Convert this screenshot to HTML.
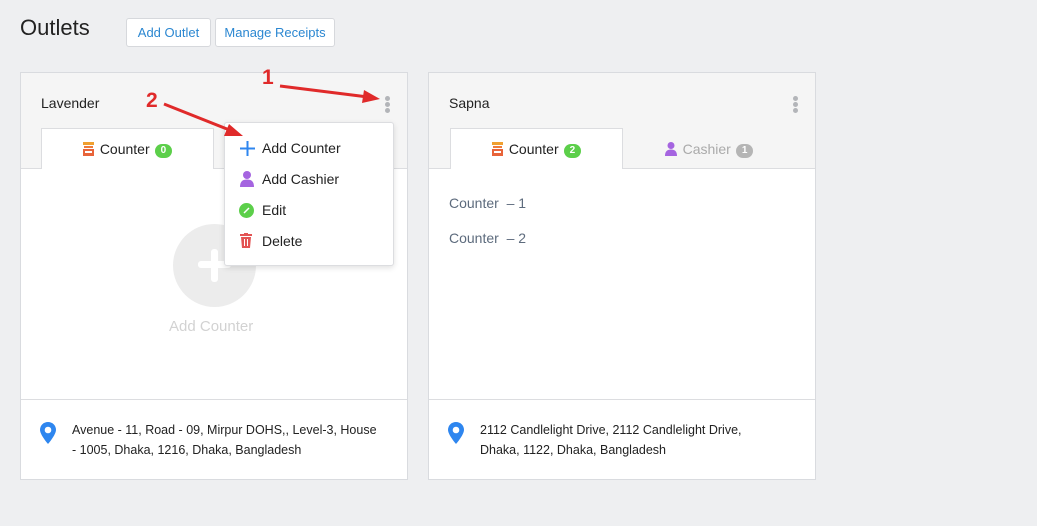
<!DOCTYPE html>
<html><head><meta charset="utf-8"><style>
*{box-sizing:border-box;margin:0;padding:0}
body{width:1037px;height:526px;background:#eeeff1;font-family:"Liberation Sans",sans-serif;position:relative;overflow:hidden;color:#222}
.a{position:absolute}
.btn{position:absolute;top:18px;height:29px;background:#fff;border:1px solid #d6d8dc;border-radius:3px;color:#2b87d1;font-size:13px;line-height:27px;text-align:center}
.card{position:absolute;top:72px;width:388px;height:408px;background:#fff;border:1px solid #d9dbdf}
.head{position:absolute;left:0;top:0;width:386px;height:96px;background:#f5f5f5;border-bottom:1px solid #dcdde0}
.tab{position:absolute;top:55px;height:41px;background:#fff;border:1px solid #dcdde0;border-bottom:none;font-size:14px;line-height:40px;text-align:center}
.badge{display:inline-block;height:14px;padding:0 6px;border-radius:7px;font-size:10px;line-height:14px;color:#fff;vertical-align:1px;margin-left:5px;font-weight:bold}
.dots{position:absolute;right:17px;top:23px;width:5px}
.dots i{display:block;width:5px;height:5px;border-radius:50%;background:#b3b5b9;margin-bottom:1px}
.foot{position:absolute;left:0;top:326px;width:386px;border-top:1px solid #dcdde0;height:80px}
.addr{position:absolute;left:51px;top:20px;font-size:12.5px;line-height:20px;color:#222}
.item{position:absolute;left:37px;font-size:14px;color:#222}
.ic{display:inline-block;vertical-align:-2px;margin-right:6px}
</style></head><body>
<div class="a" style="left:20px;top:15px;font-size:22px;color:#222">Outlets</div>
<div class="btn" style="left:126px;width:85px">Add Outlet</div>
<div class="btn" style="left:215px;width:120px">Manage Receipts</div>

<div class="card" style="left:20px">
 <div class="head">
  <div class="a" style="left:20px;top:22px;font-size:14px">Lavender</div>
  <div class="dots"><i></i><i></i><i></i></div>
  <div class="tab" style="left:20px;width:173px"><svg class="ic" width="11" height="14"><rect x="0" y="0" width="11" height="3" fill="#f0a030"/><rect x="1" y="4" width="9" height="2" fill="#ee7a3a"/><rect x="0" y="7" width="11" height="7" fill="#e8643a"/><rect x="2" y="9" width="7" height="2" fill="#fff"/></svg>Counter<span class="badge" style="background:#5ccf4a">0</span></div>
 </div>
 <div class="a" style="left:152px;top:151px;width:83px;height:83px;border-radius:50%;background:#ececec"></div>
 <div class="a" style="left:177px;top:188px;width:33px;height:7px;background:#fff;border-radius:3px"></div>
 <div class="a" style="left:190px;top:176px;width:7px;height:33px;background:#fff;border-radius:3px"></div>
 <div class="a" style="left:148px;top:245px;font-size:15px;color:#d2d2d2">Add Counter</div>
 <div class="foot">
  <svg class="a" style="left:19px;top:22px" width="16" height="22" viewBox="0 0 16 22"><path d="M8 0C3.6 0 0 3.4 0 7.8 0 13 8 22 8 22s8-9 8-14.2C16 3.4 12.4 0 8 0z" fill="#2e86ef"/><circle cx="8" cy="8" r="3.3" fill="#fff"/></svg>
  <div class="addr">Avenue - 11, Road - 09, Mirpur DOHS,, Level-3, House<br>- 1005, Dhaka, 1216, Dhaka, Bangladesh</div>
 </div>
</div>

<div class="card" style="left:428px">
 <div class="head">
  <div class="a" style="left:20px;top:22px;font-size:14px">Sapna</div>
  <div class="dots"><i></i><i></i><i></i></div>
  <div class="tab" style="left:21px;width:173px"><svg class="ic" width="11" height="14"><rect x="0" y="0" width="11" height="3" fill="#f0a030"/><rect x="1" y="4" width="9" height="2" fill="#ee7a3a"/><rect x="0" y="7" width="11" height="7" fill="#e8643a"/><rect x="2" y="9" width="7" height="2" fill="#fff"/></svg>Counter<span class="badge" style="background:#5ccf4a">2</span></div>
  <div class="a" style="left:194px;top:56px;width:172px;height:41px;font-size:14px;line-height:40px;text-align:center;color:#aaa"><svg class="ic" width="12" height="14"><circle cx="6" cy="3.5" r="3.5" fill="#a564e0"/><path d="M0 14c0-5 2.5-6.5 6-6.5s6 1.5 6 6.5z" fill="#a564e0"/></svg>Cashier<span class="badge" style="background:#b5b5b5">1</span></div>
 </div>
 <div class="a" style="left:20px;top:122px;font-size:14px;color:#5d6b7d">Counter &nbsp;– 1</div>
 <div class="a" style="left:20px;top:157px;font-size:14px;color:#5d6b7d">Counter &nbsp;– 2</div>
 <div class="foot">
  <svg class="a" style="left:19px;top:22px" width="16" height="22" viewBox="0 0 16 22"><path d="M8 0C3.6 0 0 3.4 0 7.8 0 13 8 22 8 22s8-9 8-14.2C16 3.4 12.4 0 8 0z" fill="#2e86ef"/><circle cx="8" cy="8" r="3.3" fill="#fff"/></svg>
  <div class="addr">2112 Candlelight Drive, 2112 Candlelight Drive,<br>Dhaka, 1122, Dhaka, Bangladesh</div>
 </div>
</div>

<div class="a" style="left:224px;top:122px;width:170px;height:144px;background:#fff;border:1px solid #dcdde0;border-radius:3px;box-shadow:0 2px 6px rgba(0,0,0,.12)">
 <svg class="a" style="left:15px;top:18px" width="15" height="15"><path d="M7.5 0v15M0 7.5h15" stroke="#2e86ef" stroke-width="2"/></svg>
 <div class="item" style="top:17px">Add Counter</div>
 <svg class="a" style="left:15px;top:48px" width="14" height="16"><circle cx="7" cy="4" r="4" fill="#a564e0"/><path d="M0 16c0-6 3-7.5 7-7.5s7 1.5 7 7.5z" fill="#a564e0"/></svg>
 <div class="item" style="top:48px">Add Cashier</div>
 <svg class="a" style="left:14px;top:80px" width="15" height="15"><circle cx="7.5" cy="7.5" r="7.5" fill="#5ccf4a"/><path d="M5 10l5-5" stroke="#fff" stroke-width="1.5"/></svg>
 <div class="item" style="top:79px">Edit</div>
 <svg class="a" style="left:15px;top:110px" width="12" height="15"><rect x="0" y="1" width="12" height="2" fill="#e35454"/><rect x="4" y="0" width="4" height="2" fill="#e35454"/><path d="M1 4h10l-1 11H2z" fill="#e35454"/><path d="M4.5 6v7M7.5 6v7" stroke="#fff" stroke-width="1"/></svg>
 <div class="item" style="top:110px">Delete</div>
</div>

<svg class="a" style="left:0;top:0" width="1037" height="526">
 <text x="262" y="84" font-family="Liberation Sans" font-weight="bold" font-size="21" fill="#e02a2a">1</text>
 <path d="M280 86L368 97" stroke="#e02a2a" stroke-width="3"/>
 <path d="M380 99L364 90 362 103z" fill="#e02a2a"/>
 <text x="146" y="107" font-family="Liberation Sans" font-weight="bold" font-size="21" fill="#e02a2a">2</text>
 <path d="M164 104L232 131" stroke="#e02a2a" stroke-width="3"/>
 <path d="M243 136L229 124 224 136z" fill="#e02a2a"/>
</svg>
</body></html>
